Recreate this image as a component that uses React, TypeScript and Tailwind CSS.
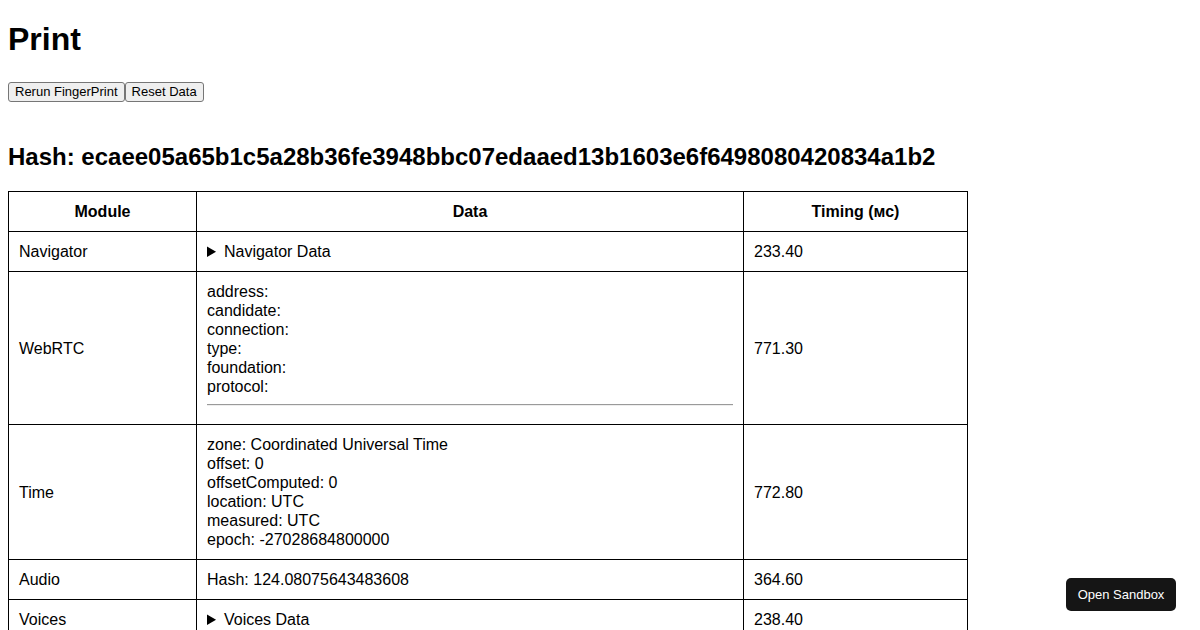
import React from "react"

type Row = {
  module: string
  data: React.ReactNode
  timing: string
}

const webrtcKeys = ["address", "candidate", "connection", "type", "foundation", "protocol"]

const timeData = [
  ["zone", "Coordinated Universal Time"],
  ["offset", "0"],
  ["offsetComputed", "0"],
  ["location", "UTC"],
  ["measured", "UTC"],
  ["epoch", "-27028684800000"],
]

function Summary({ label }: { label: string }) {
  return (
    <details>
      <summary className="cursor-pointer">{label}</summary>
    </details>
  )
}

const rows: Row[] = [
  { module: "Navigator", data: <Summary label="Navigator Data" />, timing: "233.40" },
  {
    module: "WebRTC",
    data: (
      <div>
        {webrtcKeys.map((k) => (
          <div key={k}>{k}:</div>
        ))}
        <div className="my-2 border-t border-b border-t-[#9a9a9a] border-b-[#eeeeee]" />
      </div>
    ),
    timing: "771.30",
  },
  {
    module: "Time",
    data: (
      <div>
        {timeData.map(([k, v]) => (
          <div key={k}>
            {k}: {v}
          </div>
        ))}
      </div>
    ),
    timing: "772.80",
  },
  { module: "Audio", data: "Hash: 124.08075643483608", timing: "364.60" },
  { module: "Voices", data: <Summary label="Voices Data" />, timing: "238.40" },
]

const btn =
  "bg-[#efefef] border border-[#767676] rounded-[3px] px-[6px] h-[20px] text-[13px] leading-[16px] text-black"

export default function App() {
  return (
    <div className="min-h-screen bg-white px-2 pt-[21px] pb-8 text-black font-['Liberation_Sans',Arial,sans-serif]">
      <h1 className="text-[32px] font-bold leading-[37px]">Print</h1>

      <div className="mt-[24px] flex h-[20px]">
        <button className={btn}>Rerun FingerPrint</button>
        <button className={btn}>Reset Data</button>
      </div>

      <h2 className="mt-[41px] mb-[20px] text-[24px] font-bold leading-[28px]">
        Hash: ecaee05a65b1c5a28b36fe3948bbc07edaaed13b1603e6f6498080420834a1b2
      </h2>

      <table className="w-[960px] border-collapse text-[16px] leading-[19px]">
        <thead>
          <tr>
            <th className="w-[188px] border border-black p-[10px] text-center font-bold">Module</th>
            <th className="w-[547px] border border-black p-[10px] text-center font-bold">Data</th>
            <th className="border border-black p-[10px] text-center font-bold">Timing (мс)</th>
          </tr>
        </thead>
        <tbody>
          {rows.map((r) => (
            <tr key={r.module}>
              <td className="border border-black p-[10px] align-middle">{r.module}</td>
              <td className="border border-black p-[10px] align-middle">{r.data}</td>
              <td className="border border-black p-[10px] align-middle">{r.timing}</td>
            </tr>
          ))}
        </tbody>
      </table>

      <button className="fixed right-[24px] bottom-[19px] h-[33px] w-[110px] rounded-[5px] bg-[#151515] text-[13px] text-white">
        Open Sandbox
      </button>
    </div>
  )
}
